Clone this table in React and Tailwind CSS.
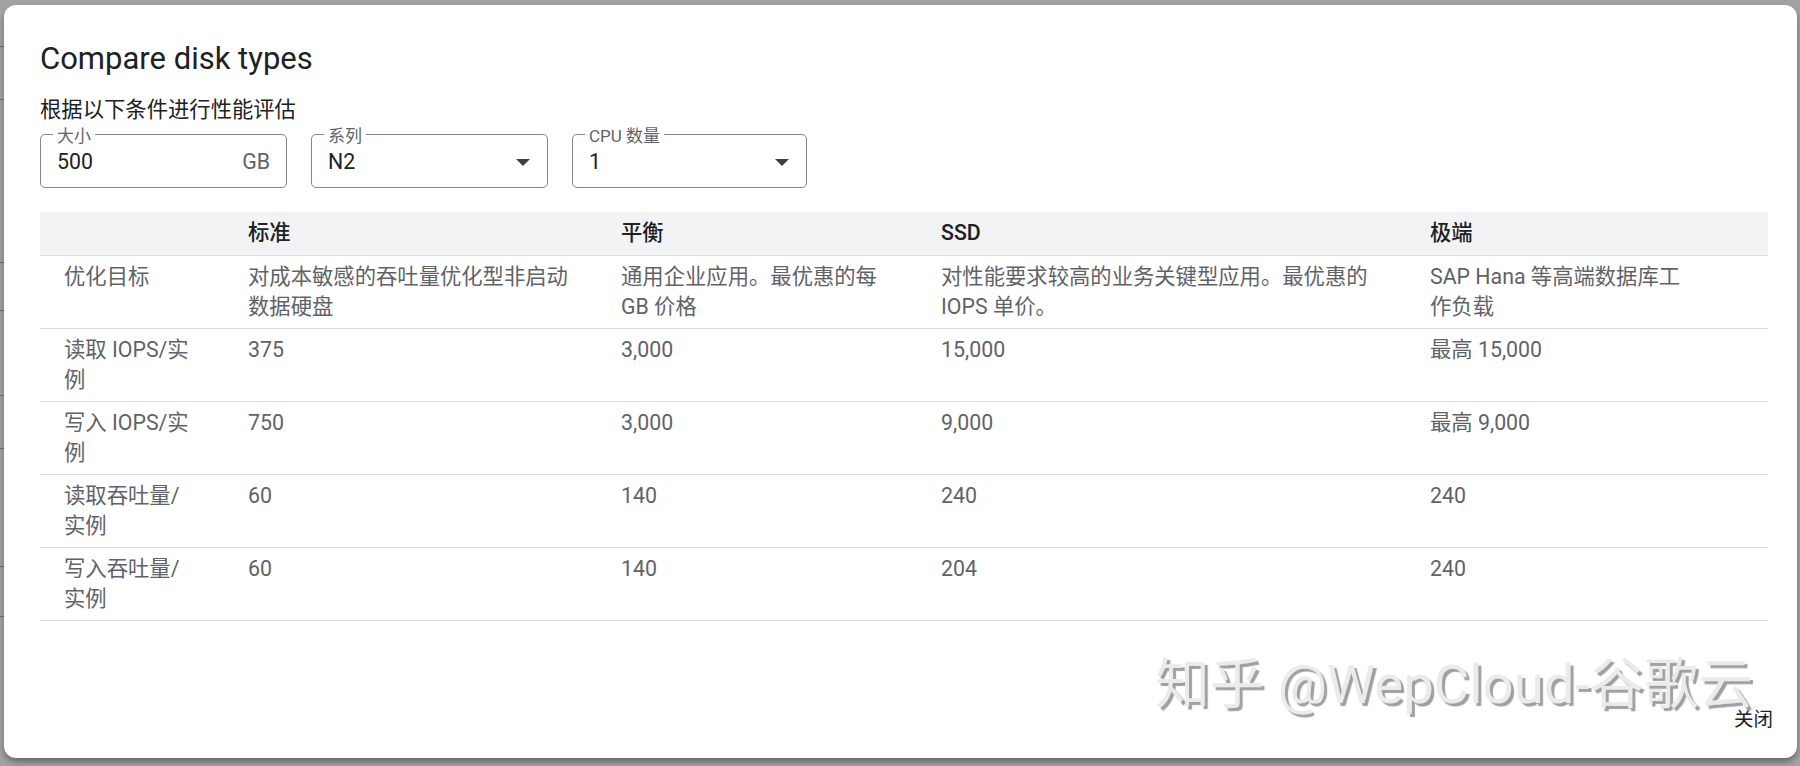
import React from "react";

const rows = [
  {
    label: "优化目标",
    cells: [
      "对成本敏感的吞吐量优化型非启动数据硬盘",
      "通用企业应用。最优惠的每 GB 价格",
      "对性能要求较高的业务关键型应用。最优惠的 IOPS 单价。",
      "SAP Hana 等高端数据库工作负载",
    ],
  },
  { label: "读取 IOPS/实例", cells: ["375", "3,000", "15,000", "最高 15,000"] },
  { label: "写入 IOPS/实例", cells: ["750", "3,000", "9,000", "最高 9,000"] },
  { label: "读取吞吐量/实例", cells: ["60", "140", "240", "240"] },
  { label: "写入吞吐量/实例", cells: ["60", "140", "204", "240"] },
];

const colMax = ["max-w-[330px]", "max-w-[272px]", "max-w-[445px]", "max-w-[252px]"];

function Caret() {
  return (
    <svg width="14" height="7" viewBox="0 0 14 7" className="shrink-0">
      <path d="M0 0h14L7 7z" fill="#3c4043" />
    </svg>
  );
}

function Field({ label, value, width, suffix, select }) {
  return (
    <fieldset
      className={`${width} border border-[#80868b] rounded-[5px] pl-[16px] pr-[16px] pt-[4px] pb-[10px] m-0 min-w-0`}
    >
      <legend className="ml-[-4px] px-[4px] text-[17px] leading-[18px] text-[#5f6368]">
        <span className="relative top-[2px]">{label}</span>
      </legend>
      <div className="flex items-center justify-between h-[30px]">
        <span className="text-[21.33px] leading-[30px] text-[#202124]">{value}</span>
        {suffix && (
          <span className="text-[21.33px] leading-[30px] text-[#5f6368]">{suffix}</span>
        )}
        {select && (
          <span className="mr-[1px]">
            <Caret />
          </span>
        )}
      </div>
    </fieldset>
  );
}

export default function App() {
  return (
    <div className="w-[1800px] h-[766px] bg-[#a3a3a3] flex overflow-hidden font-[Roboto,'Noto_Sans_CJK_SC',sans-serif]">
      <div className="w-[4px] flex flex-col shrink-0">
        <div className="mt-[46px] h-px bg-[#6e6e6e]" />
        <div className="mt-[52px] h-px bg-[#6e6e6e]" />
        <div className="mt-[162px] h-px bg-[#6e6e6e]" />
        <div className="mt-[47px] h-px bg-[#6e6e6e]" />
        <div className="mt-[84px] h-px bg-[#6e6e6e]" />
        <div className="mt-[52px] h-px bg-[#6e6e6e]" />
        <div className="mt-[117px] h-px bg-[#6e6e6e]" />
        <div className="mt-[49px] h-px bg-[#6e6e6e]" />
      </div>
      <div className="relative mt-[5px] h-[753px] w-[1793px] shrink-0 bg-white rounded-[12px] shadow-[0_4px_6px_rgba(0,0,0,0.35)] flex flex-col pl-[36px] pr-[29px] pt-[34px]">
        <h1 className="text-[31px] leading-[40px] text-[#202124] font-normal">Compare disk types</h1>
        <p className="mt-[16px] text-[21.33px] leading-[30px] text-[#202124]">根据以下条件进行性能评估</p>
        <div className="flex gap-[24px]">
          <Field label="大小" value="500" suffix="GB" width="w-[247px]" />
          <Field label="系列" value="N2" select width="w-[237px]" />
          <Field label="CPU 数量" value="1" select width="w-[235px]" />
        </div>

        <table className="mt-[24px] w-[1728px] table-fixed border-collapse text-[21.33px] leading-[30px]">
          <colgroup>
            <col className="w-[184px]" />
            <col className="w-[373px]" />
            <col className="w-[320px]" />
            <col className="w-[489px]" />
            <col className="w-[362px]" />
          </colgroup>
          <thead>
            <tr className="bg-[#f1f3f4] border-b border-[#dadce0]">
              <th className="h-[43px] p-0" />
              {["标准", "平衡", "SSD", "极端"].map((h) => (
                <th
                  key={h}
                  className="h-[43px] p-0 pl-[24px] text-left font-medium text-[#202124] align-middle"
                >
                  {h}
                </th>
              ))}
            </tr>
          </thead>
          <tbody>
            {rows.map((r) => (
              <tr key={r.label} className="border-b border-[#dadce0] h-[73px]">
                <td className="align-top pt-[6px] pb-[6px] pl-[24px] text-[#5f6368]">
                  <div className="max-w-[130px]">{r.label}</div>
                </td>
                {r.cells.map((c, i) => (
                  <td key={i} className="align-top pt-[6px] pb-[6px] pl-[24px] text-[#5f6368]">
                    <div className={colMax[i]}>{c}</div>
                  </td>
                ))}
              </tr>
            ))}
          </tbody>
        </table>

        <div className="mt-auto flex justify-end pb-[26px]">
          <button className="text-[19.5px] leading-[24px] text-[#202124] mr-[-5px]">关闭</button>
        </div>

        <div className="absolute right-[44px] top-[647px] text-[54.5px] leading-[64px] text-[#ebebeb] [text-shadow:3px_3px_1px_#a0a0a0] pointer-events-none whitespace-nowrap">
          知乎 @WepCloud-谷歌云
        </div>
      </div>
    </div>
  );
}
